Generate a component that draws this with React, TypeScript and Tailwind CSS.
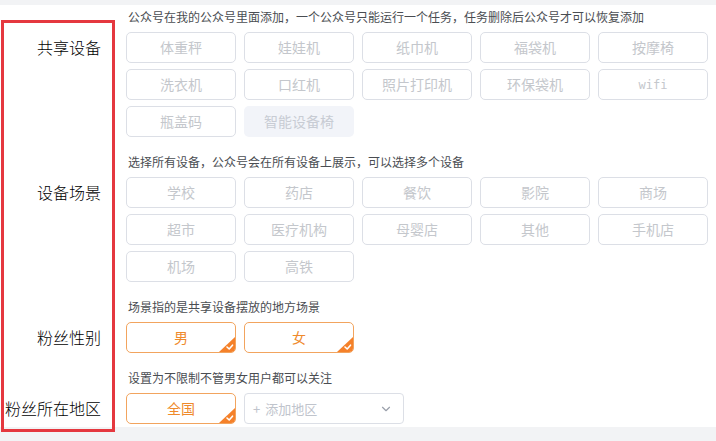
import { ChevronDown } from "lucide-react";

const devices = [
  "体重秤",
  "娃娃机",
  "纸巾机",
  "福袋机",
  "按摩椅",
  "洗衣机",
  "口红机",
  "照片打印机",
  "环保袋机",
  "wifi",
  "瓶盖码",
];

const scenes = [
  "学校",
  "药店",
  "餐饮",
  "影院",
  "商场",
  "超市",
  "医疗机构",
  "母婴店",
  "其他",
  "手机店",
  "机场",
  "高铁",
];

const FONT = "font-['Noto_Sans_CJK_SC','Noto_Sans',sans-serif]";

export default function App() {
  return (
    <div className={`relative w-[716px] h-[441px] bg-white overflow-hidden ${FONT}`}>
      <div className="h-[5px] bg-[#f2f3f5]" />

      <div className="flex flex-col gap-[15px] pt-[2px]">
        {/* 共享设备 */}
        <Section
          tip="公众号在我的公众号里面添加，一个公众号只能运行一个任务，任务删除后公众号才可以恢复添加"
          label="共享设备"
        >
          {devices.map((d) => (
            <DisabledOption key={d} text={d} mono={d === "wifi"} />
          ))}
          <div className="h-[31px] rounded-[5px] bg-[#f2f4f9] flex items-center justify-center text-[14px] text-[#c8ccd4]">
            智能设备椅
          </div>
        </Section>

        {/* 设备场景 */}
        <Section tip="选择所有设备，公众号会在所有设备上展示，可以选择多个设备" label="设备场景">
          {scenes.map((s) => (
            <DisabledOption key={s} text={s} />
          ))}
        </Section>

        {/* 粉丝性别 */}
        <Section tip="场景指的是共享设备摆放的地方场景" label="粉丝性别">
          <CheckedOption text="男" />
          <CheckedOption text="女" />
        </Section>

        {/* 粉丝所在地区 */}
        <Section tip="设置为不限制不管男女用户都可以关注" label="粉丝所在地区">
          <CheckedOption text="全国" />
          <div className="col-span-2 w-[160px] h-[31px] rounded-[4px] border border-[#dcdfe6] flex items-center pl-[8px] pr-[10px] text-[13px] text-[#c0c4cc]">
            <span className="mr-[5px]">+</span>
            <span className="flex-1">添加地区</span>
            <ChevronDown size={14} strokeWidth={2} className="text-[#9aa0ab]" />
          </div>
        </Section>
      </div>

      <div className="absolute left-0 right-0 top-[427px] bottom-0 bg-[#f2f3f5]" />

      {/* 标注框 */}
      <div className="absolute left-[1px] top-[20px] w-[114px] h-[412px] border-[3px] border-[#e5383f] pointer-events-none" />
    </div>
  );
}

function Section({
  tip,
  label,
  children,
}: {
  tip: string;
  label: string;
  children: React.ReactNode;
}) {
  return (
    <div className="flex flex-col">
      <div className="pl-[128px] text-[12px] leading-[20px] text-[#4a4d52]">{tip}</div>
      <div className="flex mt-[5px]">
        <div className="w-[126px] pr-[25px] shrink-0 text-right text-[16px] font-light leading-[31px] text-black whitespace-nowrap">
          {label}
        </div>
        <div className="grid grid-cols-[repeat(5,110px)] gap-x-[8px] gap-y-[6px]">
          {children}
        </div>
      </div>
    </div>
  );
}

function DisabledOption({ text, mono }: { text: string; mono?: boolean }) {
  return (
    <div
      className={`h-[31px] rounded-[5px] border border-[#dcdfe6] flex items-center justify-center text-[#c4c7cc] ${
        mono ? "font-['DejaVu_Sans_Mono',monospace] text-[12px]" : "text-[14px]"
      }`}
    >
      {text}
    </div>
  );
}

function CheckedOption({ text }: { text: string }) {
  return (
    <div className="relative h-[31px] rounded-[5px] border border-[#f2a45e] flex items-center justify-center text-[14px] text-[#ef8a2c] overflow-hidden">
      {text}
      <svg
        className="absolute right-0 bottom-0"
        width="16"
        height="15"
        viewBox="0 0 16 15"
      >
        <polygon points="16,0 16,15 0,15" fill="#f5812a" />
        <path
          d="M8 10 L10.2 12 L13.5 8.2"
          stroke="#fff"
          strokeWidth="1.6"
          fill="none"
          strokeLinecap="round"
          strokeLinejoin="round"
        />
      </svg>
    </div>
  );
}
